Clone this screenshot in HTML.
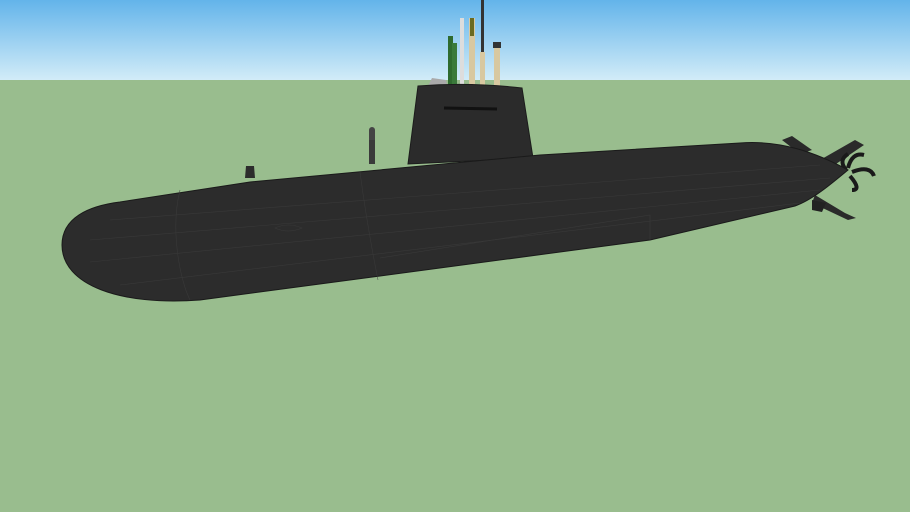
<!DOCTYPE html><html><head><style>html,body{margin:0;padding:0;width:910px;height:512px;overflow:hidden}</style></head><body>
<svg width="910" height="512" viewBox="0 0 910 512" xmlns="http://www.w3.org/2000/svg">
<defs><linearGradient id="sky" x1="0" y1="0" x2="0" y2="1"><stop offset="0" stop-color="#63b4ea"/><stop offset="1" stop-color="#d2ecf8"/></linearGradient></defs>
<rect width="910" height="80" fill="url(#sky)"/>
<rect y="80" width="910" height="432" fill="#99bd8e"/>
<!-- masts -->
<rect x="481" y="0" width="3" height="55" fill="#333"/>
<rect x="448" y="36" width="5" height="50" fill="#2f6b2f"/>
<rect x="452" y="43" width="5" height="42" fill="#3a7a3a"/>
<rect x="460" y="18" width="4" height="68" fill="#ddd"/>
<rect x="469" y="18" width="6" height="68" fill="#d8c8a0"/>
<rect x="470" y="18" width="4" height="18" fill="#6a6a20"/>
<rect x="480" y="52" width="5" height="34" fill="#d8c8a0"/>
<rect x="493" y="42" width="8" height="6" fill="#333"/>
<rect x="494" y="48" width="6" height="38" fill="#d8c8a0"/>
<path d="M428 86 L432 78 L446 80 L448 88 Z" fill="#aaa"/>
<!-- sail -->
<path d="M418 86 Q470 82 522 88 L533 158 L408 164 Z" fill="#2b2b2b" stroke="#1c1c1c"/>
<path d="M444 108 L497 109" stroke="#111" stroke-width="3"/>
<!-- fins -->
<path d="M782 140 L792 136 L812 150 L800 154 Z" fill="#2a2a2a"/>
<path d="M820 160 L855 140 L864 145 L830 168 Z" fill="#2a2a2a"/>
<path d="M815 195 L845 213 L856 218 L848 220 L812 203 Z" fill="#2a2a2a"/>
<path d="M812 200 L826 203 L822 212 L812 210 Z" fill="#222"/>
<!-- propeller -->
<g stroke="#1a1a1a" stroke-width="4" fill="none">
<path d="M848 168 Q852 152 864 155"/><path d="M852 172 Q870 165 874 176"/><path d="M850 176 Q862 190 852 190"/><path d="M846 170 Q838 160 848 154"/>
</g>
<!-- hull -->
<path d="M62 245 C62 218 88 206 120 202 L250 182 L540 155 L740 143 C780 140 815 152 848 170 C830 185 812 200 795 206 L650 240 L380 276 L200 300 C120 306 62 285 62 245 Z" fill="#2c2c2c" stroke="#1a1a1a"/>
<path d="M246 166 L254 166 L255 178 L245 178 Z" fill="#2c2c2c"/>
<!-- person -->
<rect x="369" y="130" width="6" height="10" fill="#444"/>
<circle cx="372" cy="130" r="3" fill="#444"/>
<rect x="369" y="140" width="6" height="24" fill="#3a3a3a"/>
<!-- grid lines -->
<g stroke="#3c3c3c" stroke-width="0.6" fill="none" opacity="0.8">
<path d="M110 220 L820 165"/><path d="M90 240 L830 178"/><path d="M90 262 L820 190"/><path d="M120 285 L800 203"/>
<path d="M180 190 C170 230 180 280 190 300"/><path d="M360 172 C365 210 372 250 378 280"/>
<path d="M380 258 L650 215 L650 240"/>
<path d="M275 228 Q288 222 302 228 Q288 234 275 228 Z"/>
</g>
</svg>
</body></html>
